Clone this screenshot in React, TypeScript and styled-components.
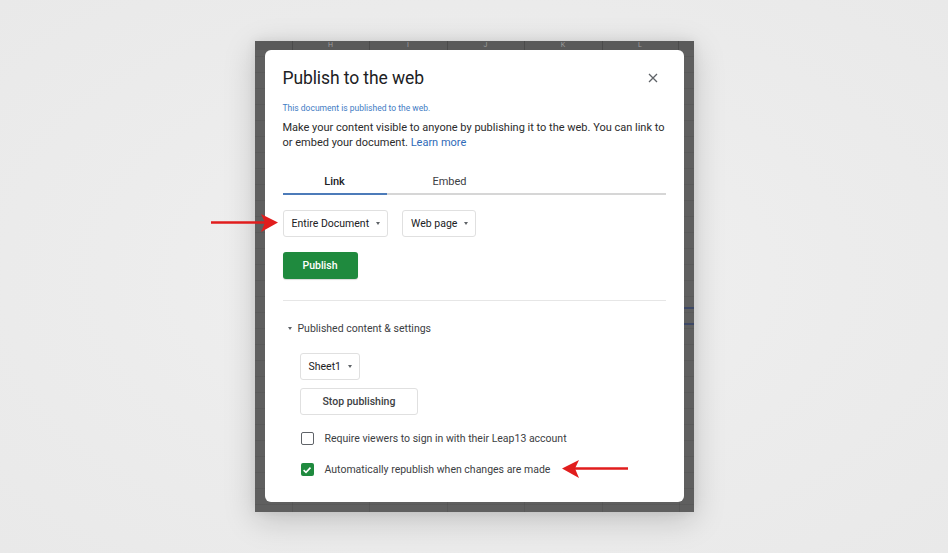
import React from "react";
import styled, { createGlobalStyle } from "styled-components";

const Global = createGlobalStyle`
  html, body { margin: 0; padding: 0; background: #ebebeb; }
  body { font-family: Roboto, "Liberation Sans", Arial, sans-serif; }
`;

const Page = styled.div`
  position: relative;
  width: 948px;
  height: 553px;
  display: flex;
  align-items: center;
  justify-content: center;
  background: radial-gradient(ellipse at center, #f1f1f1 0%, #ececec 55%, #e9e9e9 100%);
  overflow: hidden;
`;

const Sheet = styled.div`
  position: relative;
  width: 439px;
  height: 471px;
  display: flex;
  flex-direction: column;
  background-color: #5f5f5f;
  background-image:
    repeating-linear-gradient(to bottom, transparent 0 15px, rgba(0, 0, 0, 0.06) 15px 16px),
    repeating-linear-gradient(to right, transparent 0 37px, rgba(0, 0, 0, 0.08) 37px 38px, transparent 38px 77.5px);
  box-shadow: 0 8px 30px rgba(0, 0, 0, 0.18), 0 0 10px rgba(0, 0, 0, 0.08);
`;

const ColumnHeader = styled.div`
  display: flex;
  height: 9px;
  flex: none;
  background: #5a5a5a;
`;

const ColCell = styled.div<{ $w: number }>`
  width: ${(p) => p.$w}px;
  flex: none;
  box-sizing: border-box;
  border-left: 1px solid #4b4b4b;
  color: #9d9d9d;
  font-size: 7px;
  line-height: 9px;
  text-align: center;
  &:first-child { border-left: none; }
`;

const DialogArea = styled.div`
  flex: 1;
  display: flex;
  padding: 0 10px 10px 10px;
`;

const Dialog = styled.div`
  flex: 1;
  background: #fff;
  border-radius: 6px;
  padding: 0 18px;
  display: flex;
  flex-direction: column;
  color: #202124;
`;

const TitleRow = styled.div`
  display: flex;
  justify-content: space-between;
  align-items: center;
  margin-top: 16px;
`;

const Title = styled.h1`
  margin: 0;
  font-family: Roboto, "Liberation Sans", sans-serif;
  font-weight: 400;
  font-size: 17.5px;
  line-height: 24px;
  color: #202124;
  letter-spacing: -0.1px;
`;

const CloseBtn = styled.button`
  border: none;
  background: none;
  padding: 0;
  margin-right: 7px;
  width: 12px;
  height: 12px;
  display: flex;
  align-items: center;
  justify-content: center;
  cursor: pointer;
`;

const Notice = styled.div`
  margin-top: 12px;
  font-size: 8.5px;
  line-height: 12px;
  color: #3f7cc4;
`;

const Para = styled.p`
  margin: 7px 0 0 0;
  font-size: 11px;
  line-height: 14.5px;
  color: #2b2b2b;
`;

const Link = styled.a`
  color: #2f6bb8;
  text-decoration: none;
`;

const Tabs = styled.div`
  display: flex;
  margin-top: 24px;
  border-bottom: 2px solid #d6d6d6;
`;

const Tab = styled.div<{ $active?: boolean; $w: number }>`
  width: ${(p) => p.$w}px;
  text-align: center;
  font-size: 11px;
  line-height: 15px;
  padding-bottom: 4px;
  margin-bottom: -2px;
  color: ${(p) => (p.$active ? "#202124" : "#3c4043")};
  font-weight: ${(p) => (p.$active ? 500 : 400)};
  border-bottom: 2px solid ${(p) => (p.$active ? "#4c7bb9" : "transparent")};
`;

const Row = styled.div<{ $mt: number; $gap?: number; $indent?: number }>`
  display: flex;
  align-items: center;
  gap: ${(p) => p.$gap ?? 0}px;
  margin-top: ${(p) => p.$mt}px;
  padding-left: ${(p) => p.$indent ?? 0}px;
`;

const Select = styled.button`
  display: inline-flex;
  align-items: center;
  gap: 7px;
  height: 27px;
  box-sizing: border-box;
  padding: 0 7px 0 8px;
  background: #fff;
  border: 1px solid #e0e0e0;
  border-radius: 3px;
  font-family: inherit;
  font-size: 10.5px;
  color: #202124;
`;

const Caret = styled.span`
  width: 0;
  height: 0;
  border-left: 2.5px solid transparent;
  border-right: 2.5px solid transparent;
  border-top: 3px solid #5f6368;
`;

const PrimaryButton = styled.button`
  height: 27px;
  width: 75px;
  border: none;
  border-radius: 3px;
  background: #1f8a3e;
  color: #fff;
  font-family: inherit;
  font-weight: 500;
  font-size: 10.5px;
  box-shadow: 0 1px 1px rgba(0, 0, 0, 0.15);
`;

const SecondaryButton = styled.button`
  height: 27px;
  box-sizing: border-box;
  padding: 0 22px 0 22px;
  background: #fff;
  border: 1px solid #e0e0e0;
  border-radius: 3px;
  font-family: inherit;
  font-weight: 500;
  font-size: 10.5px;
  color: #3c4043;
`;

const Divider = styled.hr`
  border: none;
  border-top: 1px solid #e6e6e6;
  margin: 21px 0 0 0;
`;

const Disclosure = styled.div`
  display: flex;
  align-items: center;
  gap: 6px;
  margin-top: 21px;
  padding-left: 5px;
  font-size: 10.5px;
  color: #3c4043;
`;

const CheckRow = styled.label`
  display: flex;
  align-items: center;
  gap: 11px;
  padding-left: 18px;
  font-size: 10.5px;
  color: #3c4043;
`;

const Box = styled.span<{ $checked?: boolean }>`
  width: 13px;
  height: 13px;
  box-sizing: border-box;
  border-radius: 2px;
  border: ${(p) => (p.$checked ? "none" : "1.5px solid #5f6368")};
  background: ${(p) => (p.$checked ? "#1f8a3e" : "#fff")};
  display: inline-flex;
  align-items: center;
  justify-content: center;
  flex: none;
`;

const CheckList = styled.div`
  display: flex;
  flex-direction: column;
  gap: 18px;
  margin-top: 17px;
`;

const Arrow = styled.svg<{ $x: number; $y: number }>`
  position: absolute;
  left: ${(p) => p.$x}px;
  top: ${(p) => p.$y}px;
`;

const Selection = styled.div`
  position: absolute;
  right: 0;
  top: 266px;
  width: 10px;
  height: 14px;
  border-top: 2px solid #3d4866;
  border-bottom: 2px solid #3d4866;
`;

const cols = [
  { w: 37, l: "" },
  { w: 77, l: "H" },
  { w: 78, l: "I" },
  { w: 77, l: "J" },
  { w: 78, l: "K" },
  { w: 76, l: "L" },
  { w: 16, l: "" },
];

export default function App() {
  return (
    <>
      <Global />
      <Page>
        <Sheet>
          <ColumnHeader>
            {cols.map((c, i) => (
              <ColCell key={i} $w={c.w}>
                {c.l}
              </ColCell>
            ))}
          </ColumnHeader>
          <Selection />
          <DialogArea>
            <Dialog>
              <TitleRow>
                <Title>Publish to the web</Title>
                <CloseBtn aria-label="Close">
                  <svg width="10" height="10" viewBox="0 0 10 10">
                    <path d="M1 1L9 9M9 1L1 9" stroke="#5f6368" strokeWidth="1.3" />
                  </svg>
                </CloseBtn>
              </TitleRow>
              <Notice>This document is published to the web.</Notice>
              <Para>
                Make your content visible to anyone by publishing it to the web. You can link to
                or embed your document. <Link href="#">Learn more</Link>
              </Para>
              <Tabs>
                <Tab $active $w={104}>Link</Tab>
                <Tab $w={126}>Embed</Tab>
              </Tabs>
              <Row $mt={15} $gap={14}>
                <Select>
                  Entire Document <Caret />
                </Select>
                <Select>
                  Web page <Caret />
                </Select>
              </Row>
              <Row $mt={15}>
                <PrimaryButton>Publish</PrimaryButton>
              </Row>
              <Divider />
              <Disclosure>
                <Caret />
                Published content &amp; settings
              </Disclosure>
              <Row $mt={18} $indent={17}>
                <Select>
                  Sheet1 <Caret />
                </Select>
              </Row>
              <Row $mt={8} $indent={17}>
                <SecondaryButton>Stop publishing</SecondaryButton>
              </Row>
              <CheckList>
                <CheckRow>
                  <Box />
                  Require viewers to sign in with their Leap13 account
                </CheckRow>
                <CheckRow>
                  <Box $checked>
                    <svg width="10" height="10" viewBox="0 0 10 10">
                      <path d="M1.6 5.2L4 7.4L8.5 2.6" stroke="#fff" strokeWidth="1.6" fill="none" />
                    </svg>
                  </Box>
                  Automatically republish when changes are made
                </CheckRow>
              </CheckList>
            </Dialog>
          </DialogArea>
        </Sheet>
        <Arrow $x={211} $y={213} width="68" height="20" viewBox="0 0 68 20">
          <path d="M0 9.5H54" stroke="#e11d1d" strokeWidth="2.5" />
          <path d="M50 1L67 9.5L50 19L54 9.5Z" fill="#e11d1d" />
        </Arrow>
        <Arrow $x={561} $y={459} width="68" height="20" viewBox="0 0 68 20">
          <path d="M14 9.5H67" stroke="#e11d1d" strokeWidth="2.5" />
          <path d="M18 1L1 9.5L18 19L14 9.5Z" fill="#e11d1d" />
        </Arrow>
      </Page>
    </>
  );
}
